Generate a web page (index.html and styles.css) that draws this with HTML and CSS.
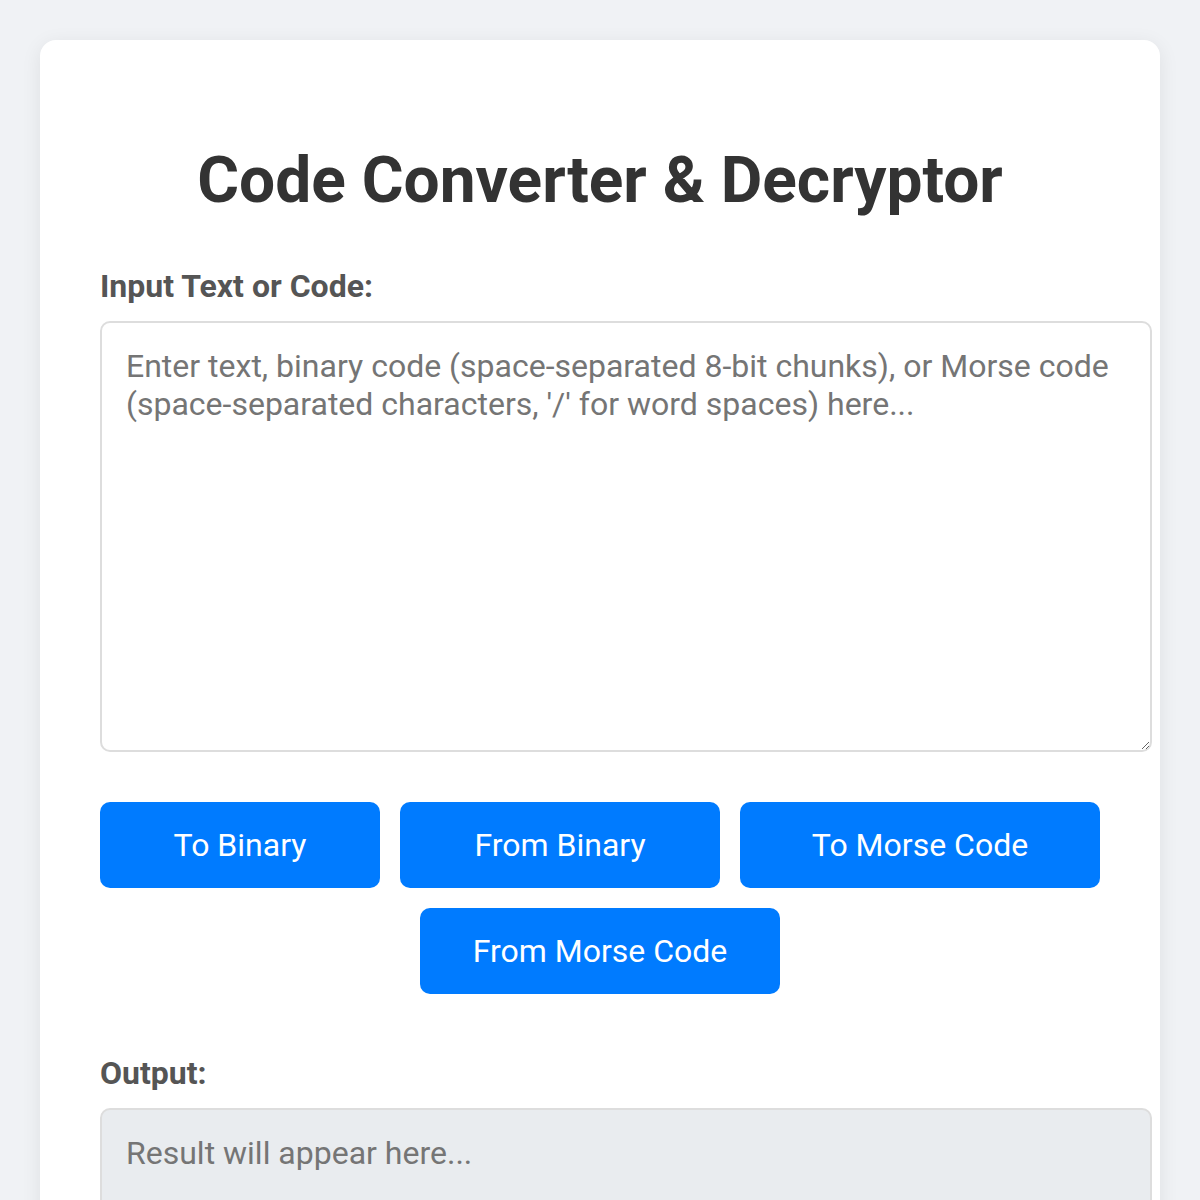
FILE: index.html
```html
<!DOCTYPE html>
<html lang="en">
<head>
    <meta charset="UTF-8">
    <meta name="viewport" content="width=device-width, initial-scale=1.0">
    <title>Code Converter &amp; Decryptor</title>
    <link rel="stylesheet" href="styles.css">
</head>
<body>

    <div class="container">
        <h1>Code Converter &amp; Decryptor</h1>

        <label for="input-text">Input Text or Code:</label>
        <textarea id="input-text" placeholder="Enter text, binary code (space-separated 8-bit chunks), or Morse code (space-separated characters, '/' for word spaces) here..."></textarea>

        <div class="button-group">
            <button class="btn-binary">To Binary</button>
            <button class="btn-from-binary">From Binary</button>
            <button class="btn-morse">To Morse Code</button>
            <button class="btn-from-morse">From Morse Code</button>
        </div>

        <label for="output-text">Output:</label>
        <textarea id="output-text" readonly placeholder="Result will appear here..."></textarea>
    </div>

</body>
</html>
```

FILE: styles.css
```css
body {
    font-family: 'Roboto', sans-serif;
    margin: 0;
    padding: 40px;
    background-color: #f0f2f5;
    color: #333;
}
.container {
    background: white;
    padding: 60px;
    border-radius: 16px;
    box-shadow: 0 4px 20px rgba(0, 0, 0, 0.08);
    min-height: 1200px;
}
h1 {
    text-align: center;
    color: #333;
    font-size: 64px;
    font-weight: 700;
    margin: 43px 0 49px;
}
label {
    display: block;
    margin-bottom: 16px;
    font-size: 32px;
    font-weight: 700;
    color: #555;
}
textarea {
    width: 100%;
    height: 379px;
    padding: 24px;
    border: 2px solid #ddd;
    border-radius: 10px;
    font-family: 'Roboto', sans-serif;
    font-size: 32px;
    line-height: 38px;
    color: #333;
    resize: vertical;
    margin-bottom: 46px;
}
textarea::placeholder {
    color: #757575;
}
#output-text {
    background-color: #e9ecef;
    height: 300px;
}
.button-group {
    display: flex;
    flex-wrap: wrap;
    justify-content: center;
    gap: 20px;
    margin-bottom: 60px;
}
button {
    background-color: #007bff;
    color: white;
    padding: 24px 40px;
    border: none;
    border-radius: 10px;
    font-family: 'Roboto', sans-serif;
    font-size: 32px;
    white-space: nowrap;
    cursor: pointer;
}
button:hover {
    background-color: #0069d9;
}
.btn-binary {
    width: 280px;
}
.btn-from-binary {
    width: 320px;
}
.btn-morse,
.btn-from-morse {
    width: 360px;
}
```
